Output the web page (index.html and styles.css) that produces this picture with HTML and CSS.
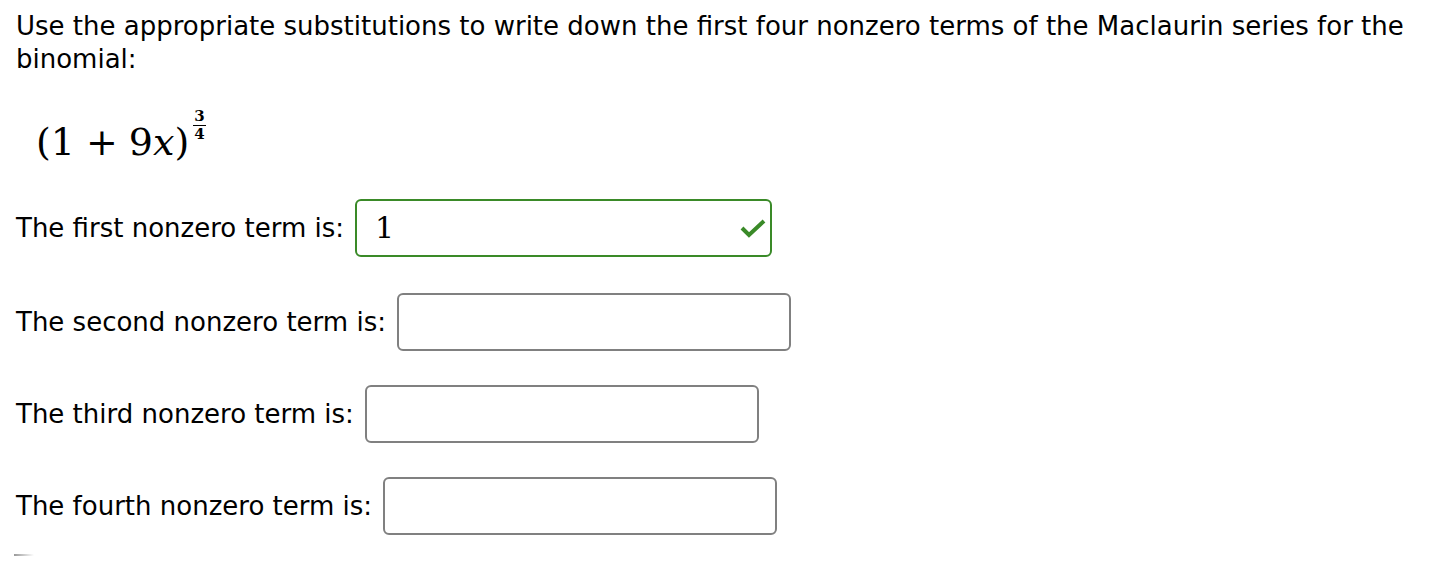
FILE: index.html
```html
<!DOCTYPE html>
<html lang="en">
<head>
	<meta charset="UTF-8">
	<title>Maclaurin series</title>
	<link rel="stylesheet" href="styles.css">
</head>
<body>
	<div class="problem">
		<p class="prompt">Use the appropriate substitutions to write down the first four nonzero terms of the Maclaurin series for the binomial:</p>
		<div class="formula">
			<span class="base"><span>(</span><span>1</span><span class="op">+</span><span>9</span><span class="var">x</span><span>)</span></span>
			<span class="power"><span class="num">3</span><span class="den">4</span></span>
		</div>

		<div class="row first">
			<label>The first nonzero term is:</label>
			<div class="answer correct">
				<span class="value">1</span>
				<svg class="check" width="26" height="20" viewBox="0 0 26 20">
					<path d="M2 10 L9 17 L24 3" fill="none" stroke="#3a8a28" stroke-width="4"/>
				</svg>
			</div>
		</div>
		<div class="row second">
			<label>The second nonzero term is:</label>
			<div class="answer"></div>
		</div>
		<div class="row">
			<label>The third nonzero term is:</label>
			<div class="answer"></div>
		</div>
		<div class="row">
			<label>The fourth nonzero term is:</label>
			<div class="answer"></div>
		</div>
		<div class="fade"></div>
	</div>
</body>
</html>
```
FILE: styles.css
```css
/*--reset--*/
body {
	margin: 0;
	font-family: "DejaVu Sans", Verdana, sans-serif;
	color: #000;
	background: #fff;
}

.problem {
	width: 1400px;
	padding: 10px 16px 0;
}

.prompt {
	margin: 0;
	font-size: 26px;
	line-height: 33px;
}

/**
 * formula (1 + 9x)^(3/4)
 */
.formula {
	display: flex;
	align-items: flex-start;
	height: 70px;
	margin: 24px 0 0 20px;
	font-family: "DejaVu Serif", "Liberation Serif", serif;
}
.formula .base {
	padding-top: 19px;
	font-size: 38px;
	line-height: 46px;
}
.formula .op {
	margin: 0 11px;
}
.formula .var {
	font-style: italic;
}
.formula .power {
	display: flex;
	flex-direction: column;
	align-items: center;
	margin: 8px 0 0 4px;
	font-size: 15px;
	line-height: 17px;
	font-weight: bold;
}
.formula .num {
	border-bottom: 1px solid #000;
	padding: 0 1px;
}

/**
 * answer rows
 */
.row {
	display: flex;
	align-items: center;
	height: 58px;
	margin-top: 34px;
	font-size: 26px;
}
.row.first {
	margin-top: 29px;
}
.row.second {
	margin-top: 36px;
}
.row label {
	margin-right: 11px;
}
.answer {
	display: flex;
	align-items: center;
	justify-content: space-between;
	box-sizing: border-box;
	width: 394px;
	height: 58px;
	border: 2px solid #808080;
	border-radius: 6px;
	padding: 0 4px 0 18px;
}
.answer.correct {
	width: 417px;
	border-color: #3a8a28;
}
.answer .value {
	font-family: "DejaVu Serif", "Liberation Serif", serif;
	font-size: 30px;
	line-height: 30px;
}

.fade {
	width: 20px;
	height: 2px;
	margin: 19px 0 0 -2px;
	background: linear-gradient(to right, #999, #fff);
}
```
